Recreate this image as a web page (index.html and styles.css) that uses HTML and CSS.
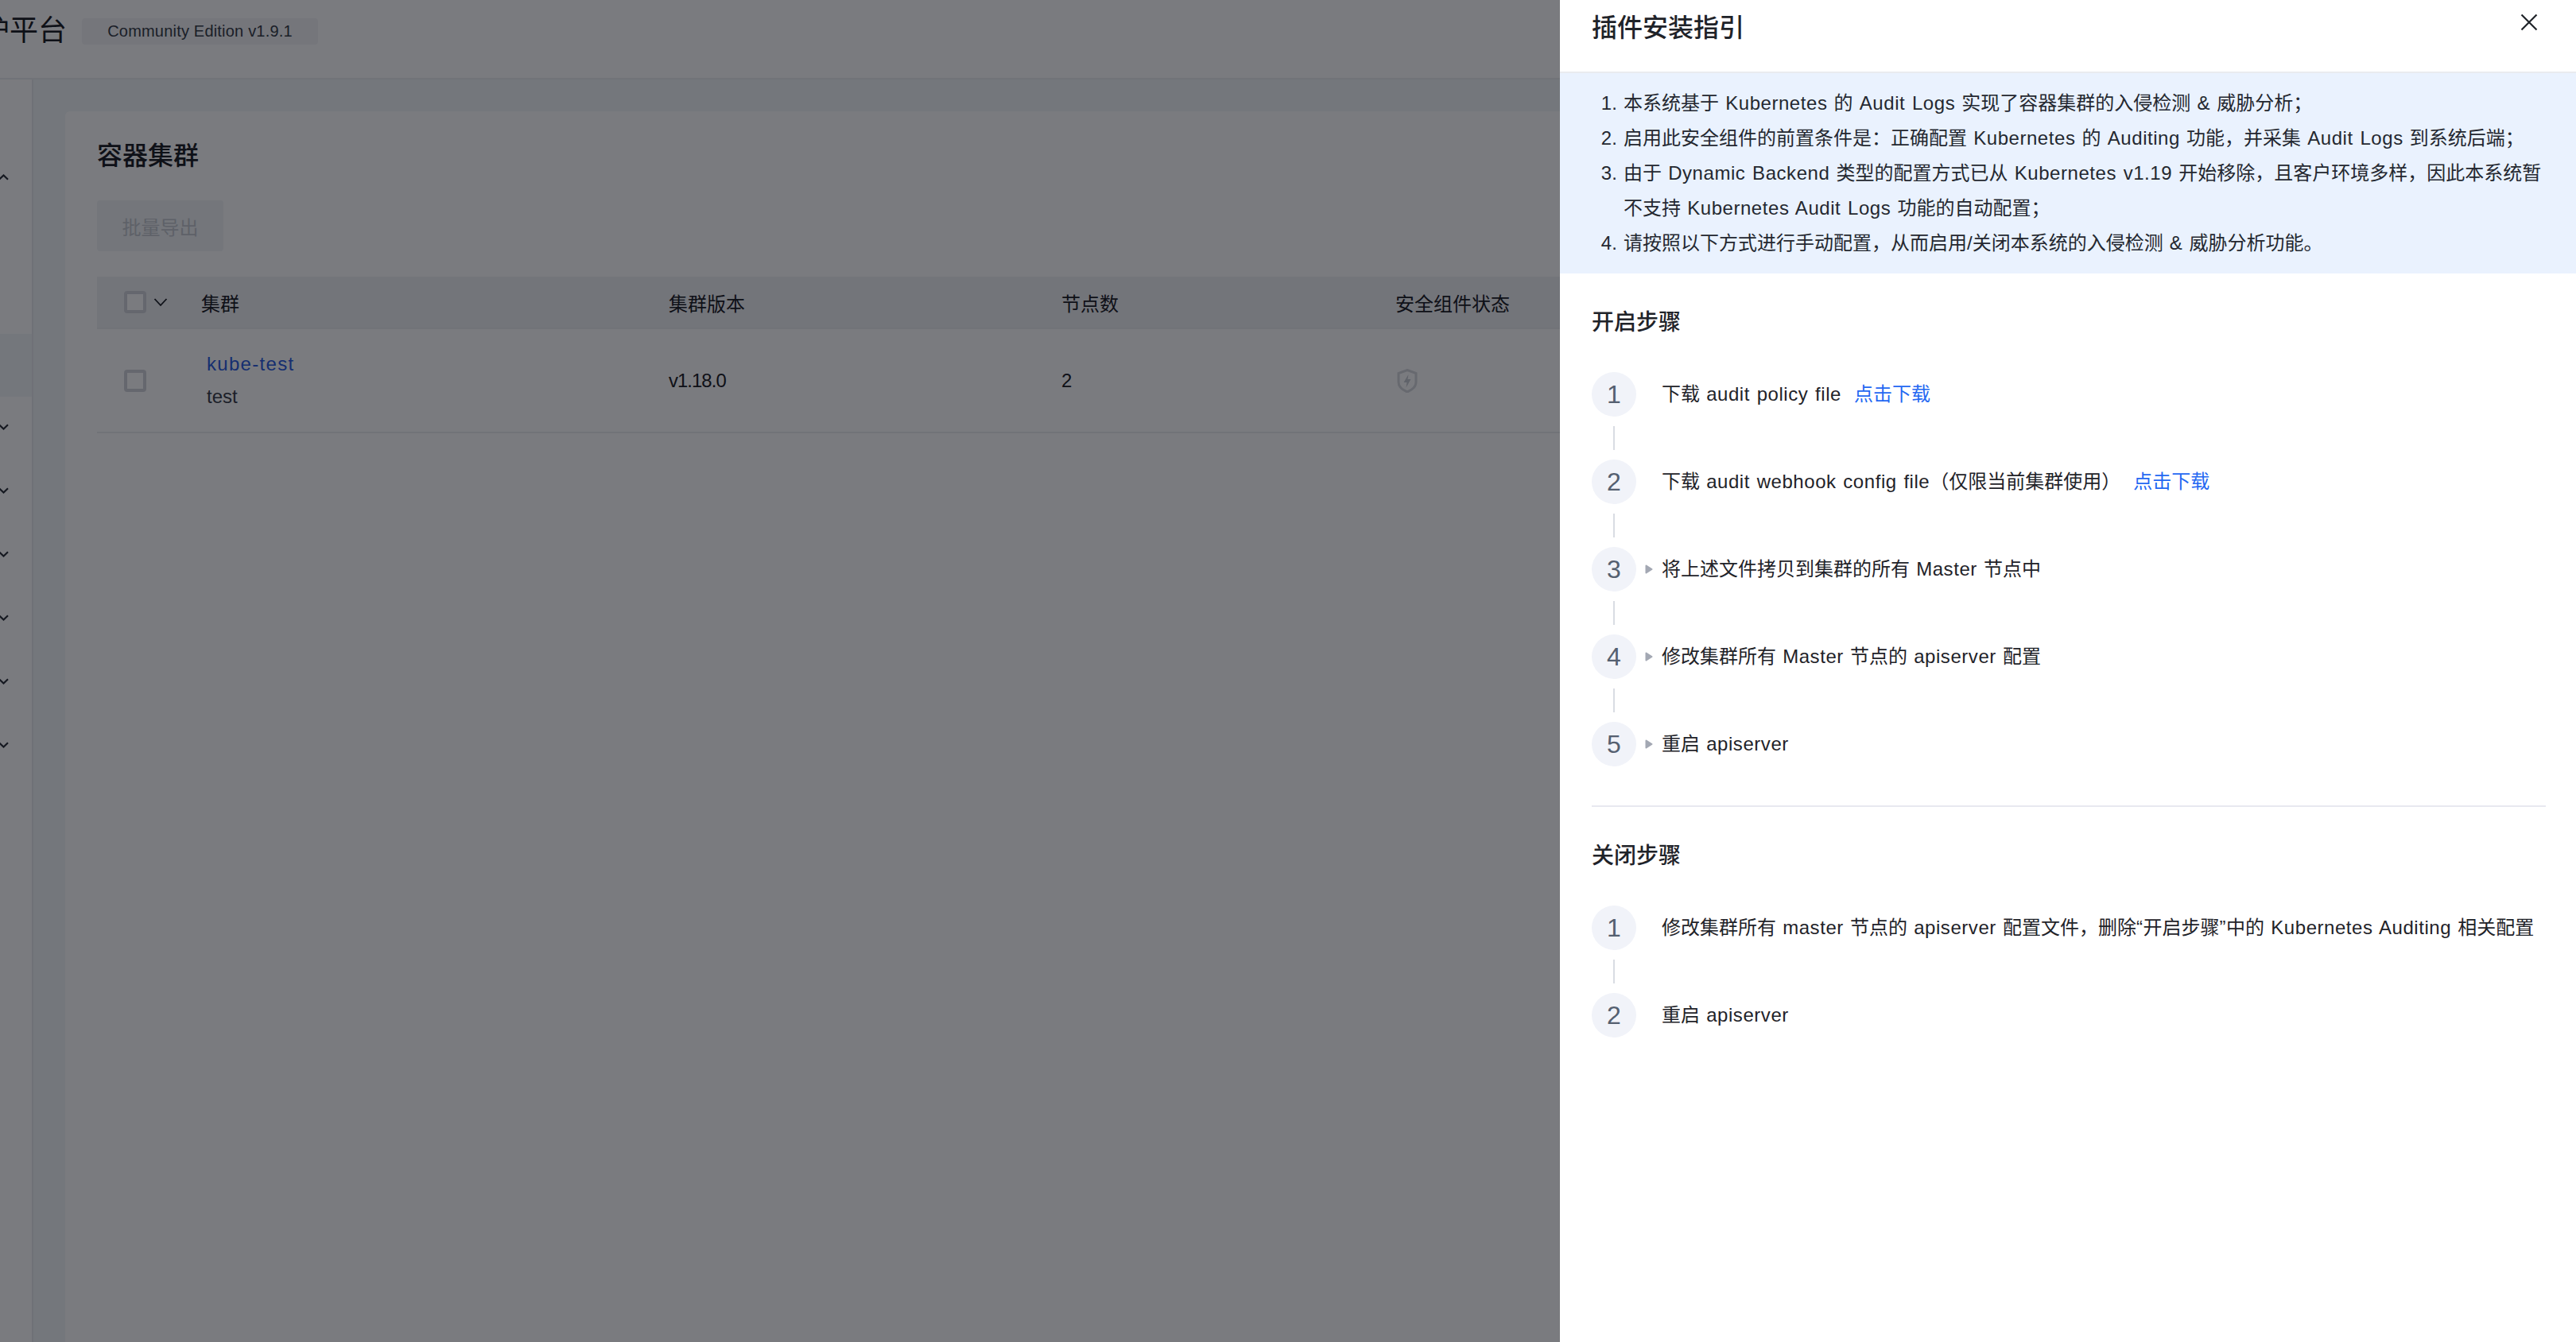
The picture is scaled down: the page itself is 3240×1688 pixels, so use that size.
FILE: index.html
```html
<!DOCTYPE html>
<html lang="zh-CN">
<head>
  <meta charset="UTF-8">
  <title>容器集群</title>
  <link rel="stylesheet" href="styles.css">
</head>
<body>

  <header class="topbar">
    <span class="brand">防护平台</span>
    <span class="edition">Community Edition v1.9.1</span>
  </header>

  <div class="main">
    <!-- 侧边栏 -->
    <aside class="sidebar">
      <svg class="nav-arrow nav-up" viewBox="0 0 13 8"><path d="M1 6.800 6.500 1.500 12 6.800"/></svg>
      <div class="nav-active"></div>
      <svg class="nav-arrow" viewBox="0 0 13 8"><path d="M1 1.200 6.500 6.500 12 1.200"/></svg>
      <svg class="nav-arrow" viewBox="0 0 13 8"><path d="M1 1.200 6.500 6.500 12 1.200"/></svg>
      <svg class="nav-arrow" viewBox="0 0 13 8"><path d="M1 1.200 6.500 6.500 12 1.200"/></svg>
      <svg class="nav-arrow" viewBox="0 0 13 8"><path d="M1 1.200 6.500 6.500 12 1.200"/></svg>
      <svg class="nav-arrow" viewBox="0 0 13 8"><path d="M1 1.200 6.500 6.500 12 1.200"/></svg>
      <svg class="nav-arrow" viewBox="0 0 13 8"><path d="M1 1.200 6.500 6.500 12 1.200"/></svg>
    </aside>

    <div class="content">
      <section class="card">
        <h2 class="card-title">容器集群</h2>
        <button class="btn-disabled">批量导出</button>

        <div class="table-row table-head">
          <div class="cell-check">
            <span class="checkbox"></span>
            <svg class="check-arrow" viewBox="0 0 18 12"><path d="M1.500 2 9 10l7.500-8"/></svg>
          </div>
          <div>集群</div>
          <div>集群版本</div>
          <div>节点数</div>
          <div>安全组件状态</div>
        </div>

        <div class="table-row table-body">
          <div class="cell-check"><span class="checkbox"></span></div>
          <div class="cell-name">
            <a class="cluster-link">kube-test</a>
            <span>test</span>
          </div>
          <div class="cell-version">v1.18.0</div>
          <div>2</div>
          <div>
            <svg class="shield" viewBox="0 0 30 30">
              <path class="shield-line" d="M15 1.500 26 5.500v11c0 6-5 10-11 12.500C9 26.500 4 22.500 4 16.500v-11z"/>
              <path class="shield-bolt" d="M16.500 7 10.500 17h4l-1 6.500L19.500 13h-4z"/>
            </svg>
          </div>
        </div>
      </section>
    </div>
  </div>

  <div class="mask"></div>

  <!-- 抽屉 -->
  <aside class="drawer">
    <div class="drawer-head">
      <h3 class="drawer-title">插件安装指引</h3>
      <svg class="drawer-close" viewBox="0 0 22 22"><path d="M1.500 1.500l19 19M20.500 1.500l-19 19"/></svg>
    </div>

    <ol class="info">
      <li>本系统基于 <span class="en">Kubernetes</span> 的 <span class="en">Audit Logs</span> 实现了容器集群的入侵检测 <span class="en">&amp;</span> 威胁分析；</li>
      <li>启用此安全组件的前置条件是：正确配置 <span class="en">Kubernetes</span> 的 <span class="en">Auditing</span> 功能，并采集 <span class="en">Audit Logs</span> 到系统后端；</li>
      <li>由于 <span class="en">Dynamic Backend</span> 类型的配置方式已从 <span class="en">Kubernetes v1.19</span> 开始移除，且客户环境多样，因此本系统暂不支持 <span class="en">Kubernetes Audit Logs</span> 功能的自动配置；</li>
      <li>请按照以下方式进行手动配置，从而启用/关闭本系统的入侵检测 <span class="en">&amp;</span> 威胁分析功能。</li>
    </ol>

    <div class="section section-open">
      <h4 class="section-title">开启步骤</h4>
      <ol class="steps">
        <li class="step">
          <span class="step-num">1</span>
          <div class="step-text">下载 <span class="en">audit policy file</span><a class="step-link">点击下载</a></div>
          <span class="step-line"></span>
        </li>
        <li class="step">
          <span class="step-num">2</span>
          <div class="step-text">下载 <span class="en">audit webhook config file</span>（仅限当前集群使用）<a class="step-link">点击下载</a></div>
          <span class="step-line"></span>
        </li>
        <li class="step">
          <span class="step-num">3</span>
          <div class="step-text">
            <svg class="caret" viewBox="0 0 10 12"><path d="M1.500 1.500 8.500 6l-7 4.500z"/></svg>
            将上述文件拷贝到集群的所有 <span class="en">Master</span> 节点中
          </div>
          <span class="step-line"></span>
        </li>
        <li class="step">
          <span class="step-num">4</span>
          <div class="step-text">
            <svg class="caret" viewBox="0 0 10 12"><path d="M1.500 1.500 8.500 6l-7 4.500z"/></svg>
            修改集群所有 <span class="en">Master</span> 节点的 <span class="en">apiserver</span> 配置
          </div>
          <span class="step-line"></span>
        </li>
        <li class="step">
          <span class="step-num">5</span>
          <div class="step-text">
            <svg class="caret" viewBox="0 0 10 12"><path d="M1.500 1.500 8.500 6l-7 4.500z"/></svg>
            重启 <span class="en">apiserver</span>
          </div>
        </li>
      </ol>
    </div>

    <div class="section">
      <h4 class="section-title">关闭步骤</h4>
      <ol class="steps">
        <li class="step">
          <span class="step-num">1</span>
          <div class="step-text">修改集群所有 <span class="en">master</span> 节点的 <span class="en">apiserver</span> 配置文件，删除<span class="en">“</span>开启步骤<span class="en">”</span>中的 <span class="en">Kubernetes Auditing</span> 相关配置</div>
          <span class="step-line"></span>
        </li>
        <li class="step">
          <span class="step-num">2</span>
          <div class="step-text">重启 <span class="en">apiserver</span></div>
        </li>
      </ol>
    </div>
  </aside>

</body>
</html>
```

FILE: styles.css
```css
* {
  box-sizing: border-box;
}

html, body {
  height: 100%;
}

body {
  margin: 0;
  overflow: hidden;
  background-color: #fff;
  color: #1f2329;
  font-family: "Liberation Sans", "Noto Sans CJK SC", sans-serif;
  font-size: 24px;
  display: flex;
  flex-direction: column;
}

/* 顶栏 */
.topbar {
  height: 100px;
  flex: none;
  display: flex;
  align-items: flex-start;
  padding-top: 23px;
  background-color: #fff;
  border-bottom: 2px solid #eceef1;
}

.brand {
  margin-left: -60px;
  font-size: 36px;
  line-height: 32px;
  white-space: nowrap;
}

.edition {
  margin-left: 19px;
  width: 297px;
  height: 33px;
  line-height: 33px;
  text-align: center;
  font-size: 20px;
  letter-spacing: 0.2px;
  color: #3a3f49;
  background-color: #f4f5f7;
  border-radius: 4px;
}

.main {
  flex: 1;
  display: flex;
  min-height: 0;
}

/* 侧边栏 */
.sidebar {
  width: 42px;
  flex: none;
  background-color: #fff;
  border-right: 2px solid #e9ebef;
  padding-top: 119px;
  display: flex;
  flex-direction: column;
}

.nav-arrow {
  flex: none;
  width: 13px;
  height: 8px;
  margin-left: -2px;
  margin-bottom: 72px;
  fill: none;
  stroke: #2e333c;
  stroke-width: 2.200;
}

.nav-up {
  margin-bottom: 0;
}

.nav-active {
  flex: none;
  height: 79px;
  margin: 193px 0 34px;
  background-color: #f3f6f8;
}

/* 内容区 */
.content {
  flex: 1;
  padding: 40px 0 0 40px;
  background-color: #f3f6f8;
}

.card {
  height: 100%;
  padding: 0 40px;
  background-color: #fff;
  border-radius: 6px 0 0 0;
}

.card-title {
  margin: 0;
  padding-top: 36px;
  font-size: 32px;
  font-weight: 500;
  line-height: 40px;
}

.btn-disabled {
  display: block;
  width: 159px;
  height: 64px;
  margin: 36px 0 32px;
  border: none;
  border-radius: 4px;
  background-color: #f2f5f7;
  color: #c5c9cf;
  font-family: inherit;
  font-size: 24px;
}

.table-row {
  display: grid;
  grid-template-columns: 131px 588px 494px 420px 1fr;
  align-items: center;
  border-bottom: 2px solid #eceef1;
}

.table-head {
  height: 66px;
  background-color: #f1f2f5;
}

.table-body {
  height: 131px;
}

.cell-check {
  display: flex;
  align-items: center;
  padding-left: 34px;
}

.checkbox {
  width: 28px;
  height: 28px;
  border: 4px solid #d3d6dc;
  border-radius: 4px;
  background-color: #fff;
}

.check-arrow {
  width: 18px;
  height: 12px;
  margin-left: 9px;
  fill: none;
  stroke: #1f2329;
  stroke-width: 1.800;
}

.cell-name {
  display: flex;
  flex-direction: column;
  gap: 13px;
  padding-left: 7px;
  line-height: 28px;
  color: #3c414b;
}

.cluster-link {
  color: #2f5fe0;
  letter-spacing: 1.300px;
}

.cell-version {
  letter-spacing: -1px;
}

.shield {
  display: block;
  width: 30px;
  height: 30px;
}

.shield-line {
  fill: none;
  stroke: #d7d9de;
  stroke-width: 3;
}

.shield-bolt {
  fill: #c9ccd3;
}

.mask {
  position: absolute;
  inset: 0;
  background-color: rgba(0, 1, 9, 0.52);
}

/* 抽屉 */
.drawer {
  position: absolute;
  top: 0;
  right: 0;
  bottom: 0;
  width: 1278px;
  background-color: #fff;
  word-spacing: 1.500px;
}

.en {
  letter-spacing: 0.550px;
}

.drawer-head {
  height: 92px;
  display: flex;
  justify-content: space-between;
  align-items: flex-start;
  padding: 13px 48px 0 40px;
  border-bottom: 2px solid #e9ebef;
}

.drawer-title {
  margin: 0;
  font-size: 32px;
  font-weight: 500;
  line-height: 44px;
}

.drawer-close {
  width: 22px;
  height: 22px;
  margin-top: 4px;
  fill: none;
  stroke: #1f2329;
  stroke-width: 2.200;
}

.info {
  margin: 0;
  padding: 16px 38px 16px 80px;
  background-color: #eaf2fe;
  line-height: 44px;
  color: #242830;
}

.section {
  margin: 0 38px 0 40px;
  padding-top: 42px;
}

.section-open {
  padding-bottom: 49px;
  border-bottom: 2px solid #e8e9f0;
}

.section-title {
  margin: 0 0 42px;
  font-size: 28px;
  font-weight: 500;
  line-height: 40px;
}

.steps {
  margin: 0;
  padding: 0;
  list-style: none;
}

.step {
  display: grid;
  grid-template-columns: 56px 1fr;
  grid-template-rows: 56px auto;
  column-gap: 32px;
}

.step-num {
  width: 56px;
  height: 56px;
  line-height: 56px;
  text-align: center;
  border-radius: 50%;
  background-color: #f1f3f9;
  color: #556070;
  font-size: 32px;
}

.step-text {
  position: relative;
  grid-column: 2;
  grid-row: 1 / span 2;
  padding-top: 8px;
  line-height: 40px;
}

.caret {
  position: absolute;
  left: -21px;
  top: 22px;
  width: 10px;
  height: 12px;
  fill: #a3a8b3;
  stroke: #a3a8b3;
  stroke-width: 2;
  stroke-linejoin: round;
}

.step-link {
  margin-left: 16px;
  color: #2468f2;
}

.step-line {
  grid-column: 1;
  grid-row: 2;
  justify-self: center;
  width: 2px;
  height: 30px;
  margin: 12px 0;
  background-color: #d9dce3;
}
```
